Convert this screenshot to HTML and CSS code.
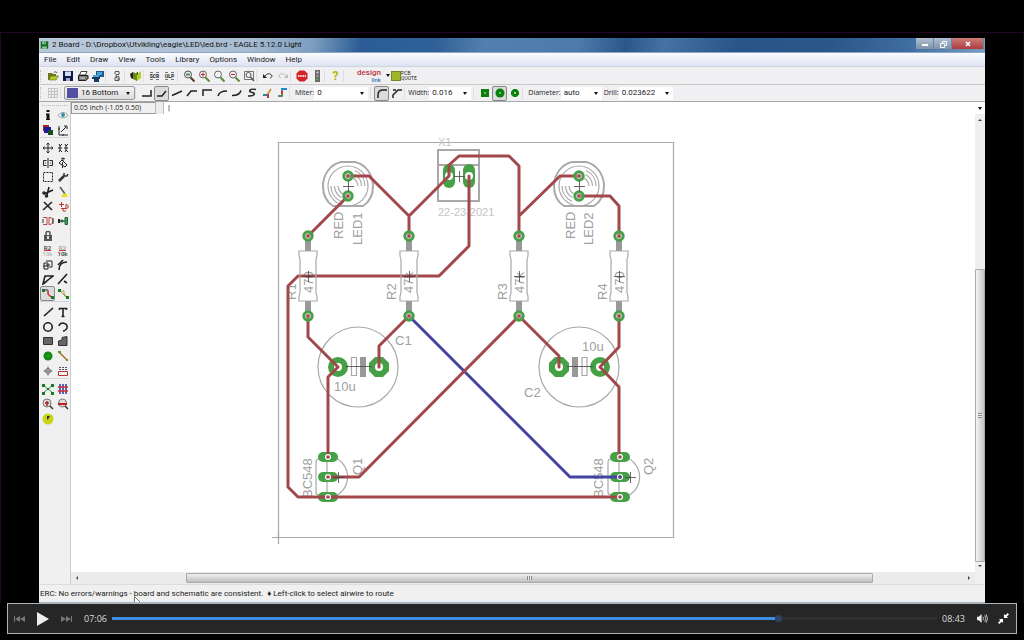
FILE: index.html
```html
<!DOCTYPE html>
<html lang="en">
<head>
<meta charset="utf-8">
<title>EAGLE board video</title>
<link rel="stylesheet" href="styles.css">
</head>
<body>
<main class="stage">
<section class="window">
  <header class="titlebar">
    <svg class="ico" viewBox="0 0 12 12"><path fill="#1d6b2a" d="M1 1h10v10H1z"/><path fill="#8fd08f" d="M3 1h5v4H3zM3 8h6v3H3z"/><path fill="#123" d="M6 2h1v2H6z"/></svg>
    <h1 class="title">2 Board - D:\Dropbox\Utvikling\eagle\LED\led.brd - EAGLE 5.12.0 Light</h1>
    <div class="wincontrols">
      <button class="wc" aria-label="Minimize"><svg viewBox="0 0 12 8"><path fill="#fff" d="M3 4h6v2H3z"/></svg></button>
      <button class="wc wc-max" aria-label="Restore"><svg viewBox="0 0 12 8"><path fill="none" stroke="#fff" d="M3.500 3.500h4v4h-4zM5.500 3v-1.500h4v4H8"/></svg></button>
      <button class="wc wc-close" aria-label="Close"><svg viewBox="0 0 12 8"><path stroke="#fff" stroke-width="1.500" d="M4 2l4 4M8 2l-4 4"/></svg></button>
    </div>
  </header>
  <nav class="menu">
    <button>File</button><button>Edit</button><button>Draw</button><button>View</button><button>Tools</button><button>Library</button><button>Options</button><button>Window</button><button>Help</button>
  </nav>
  <div class="toolbar">
    <span class="grip"></span>
    <button class="tool" aria-label="Open"><svg viewBox="0 0 12 12"><path fill="#6a7a18" d="M1 3h4l1 1h3v2H4L2 10H1z"/><path fill="#b9c83a" stroke="#5f6d10" stroke-width=".6" d="M4 6h7.500L9 10H2z"/><path fill="none" stroke="#333" stroke-width=".8" d="M7 2.500c1-1 2.500-1 3 .5"/></svg></button>
    <button class="tool" aria-label="Save"><svg viewBox="0 0 12 12"><path fill="#101a50" d="M1 1h10v10H1z"/><path fill="#cfe0f2" d="M3 1.500h6V6H3z"/><path fill="#aab" d="M4 8h4v3H4z"/></svg></button>
    <button class="tool" aria-label="Print"><svg viewBox="0 0 12 12"><path fill="#fff" stroke="#444" d="M4 1.500h6L8.500 5h-6z"/><path fill="#777" stroke="#222" d="M1.500 5.500h9.500v3l-2 2H1.500z"/><path stroke="#ddd" d="M3 8h5"/></svg></button>
    <button class="tool" aria-label="CAM processor"><svg viewBox="0 0 12 12"><path fill="#24588c" d="M4 1h8v6H4z"/><path fill="#45a5d8" d="M5 2h5v3H5zM1 5h6v2H1z"/><path fill="#163a60" d="M0 7h8v2H0zM2 9h5v3H2z"/></svg></button>
    <span class="sep"></span>
    <button class="tool" aria-label="Schematic"><svg viewBox="0 0 12 12"><path fill="none" stroke="#555" d="M4 1.500h4v3H5v2h3v4H4v-3h2M3 3h2M6 9h3"/></svg></button>
    <span class="sep"></span>
    <button class="tool" aria-label="Use library"><svg viewBox="0 0 12 12"><path fill="#222" d="M0 4l3-2v7l-2-1z"/><path fill="#6c8b12" d="M3 2l4 2v7L3 9z"/><path fill="#b5cc2a" d="M7 4l4-3v7l-4 3z"/><path fill="#26450c" d="M6 3l2-1v3z"/></svg></button>
    <span class="sep"></span>
    <button class="tool tiny" aria-label="Run script"><span>SCR</span></button>
    <button class="tool tiny" aria-label="Run ULP"><span>ULP</span></button>
    <span class="sep"></span>
    <button class="tool" aria-label="Zoom fit"><svg viewBox="0 0 12 12"><circle cx="5" cy="4.500" r="3.500" fill="#dfe8ee" stroke="#555"/><path stroke="#5a3a1a" stroke-width="2" d="M7.500 7.500l4 4"/><path fill="#58895a" d="M3 3.500h4v2H3z"/></svg></button>
    <button class="tool" aria-label="Zoom in"><svg viewBox="0 0 12 12"><circle cx="5" cy="4.500" r="3.500" fill="#f4eeee" stroke="#666"/><path stroke="#5c8a3a" stroke-width="2" d="M7.500 7.500l4 4"/><path stroke="#c22" d="M3 4.500h4M5 2.500v4"/></svg></button>
    <button class="tool" aria-label="Zoom out"><svg viewBox="0 0 12 12"><circle cx="5" cy="4.500" r="3.500" fill="#f4f4f4" stroke="#666"/><path stroke="#5c8a3a" stroke-width="2" d="M7.500 7.500l4 4"/></svg></button>
    <button class="tool" aria-label="Zoom redraw"><svg viewBox="0 0 12 12"><circle cx="5" cy="4.500" r="3.500" fill="#f4eeee" stroke="#666"/><path stroke="#5c8a3a" stroke-width="2" d="M7.500 7.500l4 4"/><path stroke="#c22" d="M3 4.500h4"/></svg></button>
    <button class="tool" aria-label="Zoom select"><svg viewBox="0 0 12 12"><path fill="none" stroke="#777" d="M1.500 1.500h9v8h-9z"/><circle cx="5.500" cy="5" r="2.500" fill="#eee" stroke="#555"/><path stroke="#555" stroke-width="1.500" d="M7.500 7l3.500 4"/></svg></button>
    <span class="sep"></span>
    <button class="tool" aria-label="Undo"><svg viewBox="0 0 12 12"><path fill="none" stroke="#333" d="M3 6c2-3 6-3 7 0 0 1-1 2-2 2"/><path fill="#222" d="M1 4v4h4z"/></svg></button>
    <button class="tool" aria-label="Redo"><svg viewBox="0 0 12 12"><path fill="none" stroke="#bbb" d="M9 6C7 3 3 3 2 6c0 1 1 2 2 2"/><path fill="#bbb" d="M11 4v4H7z"/></svg></button>
    <span class="sep"></span>
    <button class="tool" aria-label="Stop"><svg viewBox="0 0 12 12"><path fill="#d02428" d="M3.500.5h5l3 3v5l-3 3h-5l-3-3v-5z"/><path stroke="#fbd5d5" stroke-width="2" stroke-dasharray="1.500 .7" d="M2 6h8"/></svg></button>
    <button class="tool" aria-label="Go"><svg viewBox="0 0 12 12"><path fill="#666" d="M4 0h5v12H4z"/><circle cx="6.500" cy="2.500" r="1.300" fill="#bbb"/><circle cx="6.500" cy="6" r="1.300" fill="#999"/><circle cx="6.500" cy="9.500" r="1.300" fill="#5a5"/></svg></button>
    <span class="sep"></span>
    <button class="tool help" aria-label="Help">?</button>
    <span class="sep"></span>
    <button class="brand" aria-label="Design link"><span class="red">design</span><span class="blue">link</span></button>
    <span class="tri"></span>
    <button class="pcb" aria-label="PCB quote"><span class="chip"></span><span class="pcbtext">PCB<br>QUOTE</span></button>
  </div>
  <div class="toolbar second">
    <span class="grip"></span>
    <button class="tool" aria-label="Grid"><svg viewBox="0 0 12 12"><path fill="none" stroke="#c4c4c4" d="M1.500 1v10M4.500 1v10M7.500 1v10M10.500 1v10M1 1.500h10M1 4.500h10M1 7.500h10M1 10.500h10"/></svg></button>
    <span class="sep"></span>
    <label class="pick layer"><i class="swatch"></i><select aria-label="Layer"><option>16 Bottom</option></select></label>
    <span class="sep"></span>
    <button class="tool" aria-label="Bend 0"><svg class="w" viewBox="0 0 12 12"><path d="M1 9h9V3"/></svg></button>
    <button class="tool on" aria-label="Bend 1"><svg class="w" viewBox="0 0 12 12"><path d="M1 9h5l4-5"/></svg></button>
    <button class="tool" aria-label="Bend 2"><svg class="w" viewBox="0 0 12 12"><path d="M1 8.500L11 4"/></svg></button>
    <button class="tool" aria-label="Bend 3"><svg class="w" viewBox="0 0 12 12"><path d="M1 9l4-5h6"/></svg></button>
    <button class="tool" aria-label="Bend 4"><svg class="w" viewBox="0 0 12 12"><path d="M2 9V3h9"/></svg></button>
    <button class="tool" aria-label="Bend 5"><svg class="w" viewBox="0 0 12 12"><path d="M2 9c1-4 4-5 9-5"/></svg></button>
    <button class="tool" aria-label="Bend 6"><svg class="w" viewBox="0 0 12 12"><path d="M1 8.500c5 0 8-1 9-5"/></svg></button>
    <button class="tool" aria-label="Bend 7"><svg class="w" viewBox="0 0 12 12"><path d="M10 2.500C3 1 2 5 6 5.500s3 4-4 3.500"/></svg></button>
    <button class="tool" aria-label="Bend 8"><svg viewBox="0 0 12 12"><path stroke="#d08a20" stroke-width="1.500" d="M6 8l4-6"/><path stroke="#28a" stroke-width="2" d="M2 8h4"/><path stroke="#c33" stroke-width="2" d="M7 7v4"/></svg></button>
    <button class="tool" aria-label="Bend 9"><svg viewBox="0 0 12 12"><path stroke="#2a6a3a" stroke-width="1.500" fill="none" d="M2 9h4V2"/><path stroke="#28c" stroke-width="2" d="M5 2h6"/><path stroke="#c33" stroke-width="2" d="M6 4v3"/></svg></button>
    <span class="sep wide"></span>
    <label for="miter">Miter:</label>
    <span class="pick miter"><select id="miter"><option>0</option></select></span>
    <span class="sep"></span>
    <button class="tool on" aria-label="Round miter"><svg class="w" viewBox="0 0 12 12"><path d="M2 11V8c0-3 2-5 5-5h4"/></svg></button>
    <button class="tool" aria-label="Straight miter"><svg class="w" viewBox="0 0 12 12"><path d="M2 11V8l5-5h4M2 3h3"/></svg></button>
    <span class="sep"></span>
    <label for="width">Width:</label>
    <span class="pick width"><select id="width"><option>0.016</option></select></span>
    <span class="sep"></span>
    <button class="tool" aria-label="Square via"><svg viewBox="0 0 12 12"><path fill="#0c800c" d="M2 2h8v8H2z"/><circle cx="6" cy="6" r="1" fill="#8c8"/></svg></button>
    <button class="tool on" aria-label="Round via"><svg viewBox="0 0 12 12"><circle cx="6" cy="6" r="4.500" fill="#0c800c"/><circle cx="6" cy="6" r="1" fill="#8c8"/></svg></button>
    <button class="tool" aria-label="Octagon via"><svg viewBox="0 0 12 12"><path fill="#0c800c" d="M4.500 2h3L10 4.500v3L7.500 10h-3L2 7.500v-3z"/><circle cx="6" cy="6" r="1" fill="#cec"/></svg></button>
    <span class="sep wide"></span>
    <label for="diameter">Diameter:</label>
    <span class="pick diameter"><select id="diameter"><option>auto</option></select></span>
    <label for="drill">Drill:</label>
    <span class="pick drill"><select id="drill"><option>0.023622</option></select></span>
  </div>
  <div class="work">
    <aside class="side">
      <span class="hgrip"></span>
      <div class="group g2">
        <button aria-label="Info"><svg viewBox="0 0 12 12"><path fill="#111" d="M4.500 1h3v2h-3zM4 4.500h3.500V10H8v1H4v-1h.5V6H4z"/></svg></button>
        <button aria-label="Show"><svg viewBox="0 0 12 12"><path fill="#fff" stroke="#999" d="M1 6.500c3-4 7-4 10 0-3 3-7 3-10 0z"/><circle cx="6" cy="6" r="2" fill="#2a90b0"/></svg></button>
        <button aria-label="Display"><svg viewBox="0 0 12 12"><path fill="#a22" d="M1 1h6v6H1z"/><path fill="#1a1a9a" d="M2 3h7v6H2z"/><path fill="#174d20" d="M6 6h5v5H6z"/></svg></button>
        <button aria-label="Mark"><svg class="l" viewBox="0 0 12 12"><path d="M2 2v9h9M4 8l5-5M7 2h3v3M1 5h2M6 10v2"/></svg></button>
      </div>
      <div class="group g11">
        <button aria-label="Move"><svg class="l" viewBox="0 0 12 12"><path d="M6 1v10M1 6h10M4.500 2.500L6 1l1.500 1.500M4.500 9.500L6 11l1.500-1.500M2.500 4.500L1 6l1.500 1.500M9.500 4.500L11 6 9.500 7.500"/></svg></button>
        <button aria-label="Copy"><svg class="l" viewBox="0 0 12 12"><path d="M2 2l1 2v4l-1 2M5 2L3 4M5 10L3 8M8 2l1 2v4l-1 2M11 2L9 4M11 10L9 8M1 6h4M7 6h4"/></svg></button>
        <button aria-label="Mirror"><svg class="l" viewBox="0 0 12 12"><path d="M4.500 3.500h-3v5h3M7.500 3.500h3v5h-3M6 1v10M3 6h1M8 6h1"/></svg></button>
        <button aria-label="Rotate"><svg class="l" viewBox="0 0 12 12"><path d="M5.500 11V5M2 6l3-3 5 5-2 2zM6 1v3M4 2l2-1 2 1"/></svg></button>
        <button aria-label="Group"><svg class="l dash" viewBox="0 0 12 12"><path d="M1.500 1.500h9v9h-9z"/></svg></button>
        <button aria-label="Change"><svg viewBox="0 0 12 12"><path stroke="#333" stroke-width="2.500" d="M2 10l5-5"/><path fill="none" stroke="#333" stroke-width="1.500" d="M7 2v3h3l1-2"/></svg></button>
        <button aria-label="Cut"><svg class="l b" viewBox="0 0 12 12"><path d="M2 8l9-4M7 1L5 9"/><circle cx="2" cy="7" r="1"/><circle cx="4.500" cy="10" r="1"/></svg></button>
        <button aria-label="Paste"><svg viewBox="0 0 12 12"><path stroke="#555" stroke-width="1.500" d="M3 1l5 7"/><path fill="#e8e020" d="M6 8l3-1 2 4H4z"/></svg></button>
        <button aria-label="Delete"><svg class="l b" viewBox="0 0 12 12"><path d="M2 2l8 8M10 2l-9 8"/></svg></button>
        <button aria-label="Add"><svg viewBox="0 0 12 12"><path fill="none" stroke="#b33" d="M2 4.500h5M4.500 2v5M4 8.500h5v-4c3 0 3 4 0 4M6 8v3h3"/></svg></button>
        <button aria-label="Pinswap"><svg viewBox="0 0 12 12"><path fill="none" stroke="#b44" d="M1 2.500h4v7H1M7 2.500h1c4 1 4 6 0 7H7z"/><path stroke="#333" d="M1 4v4M11 3v6"/></svg></button>
        <button aria-label="Replace"><svg viewBox="0 0 12 12"><path fill="#222" d="M1 4h2v4H1z"/><path stroke="#222" d="M3 6h6"/><path fill="#496" stroke="#263" d="M8 2.500h2.500v7H8z"/><circle cx="5" cy="6" r="1.500" fill="#263"/></svg></button>
        <button aria-label="Lock"><svg viewBox="0 0 12 12"><path fill="none" stroke="#555" stroke-width="1.500" d="M4 5V3c0-2 4-2 4 0v2"/><path fill="#555" d="M2 5h8v6H2z"/><path fill="#ddd" d="M5 6h2v3H5z"/></svg></button>
        <span></span>
        <button class="names" aria-label="Name"><b>R2</b><i>10k</i></button>
        <button class="names alt" aria-label="Value"><b>R2</b><i>10k</i></button>
        <button aria-label="Smash"><svg class="l" viewBox="0 0 12 12"><path d="M2 4h4v6H2zM4 2h6v6H7M4 6h4M1 7h5"/></svg></button>
        <button aria-label="Miter"><svg class="l b" viewBox="0 0 12 12"><path d="M2 11c0-5 3-8 8-8M1 6l5-5"/></svg></button>
        <button aria-label="Split"><svg class="l b" viewBox="0 0 12 12"><path d="M1 11l2-8h8L6 7zM5 8l-4 3"/></svg></button>
        <button aria-label="Optimize"><svg class="l b" viewBox="0 0 12 12"><path d="M1 11L10 1M7 8l3 2"/></svg></button>
        <button class="on" aria-label="Route"><svg viewBox="0 0 12 12"><path fill="none" stroke="#226" d="M1 2h5"/><path fill="none" stroke="#c33" stroke-width="1.500" d="M6 2v4l3 3"/><path fill="#197a19" d="M0 1h3v3H0zM9 8h3v3H9z"/></svg></button>
        <button aria-label="Ripup"><svg viewBox="0 0 12 12"><path fill="none" stroke="#a95" d="M2 3h5v3l3 3M3 3l6 6"/><path fill="#197a19" d="M1 1h3v3H1zM9 8h3v3H9z"/></svg></button>
      </div>
      <div class="group g5">
        <button aria-label="Wire"><svg class="l b" viewBox="0 0 12 12"><path d="M2 10l9-8"/></svg></button>
        <button aria-label="Text"><svg class="l b" viewBox="0 0 12 12"><path d="M2.500 4V2.500h7V4M6 3v8M4.500 10.500h3"/></svg></button>
        <button aria-label="Circle"><svg class="l b" viewBox="0 0 12 12"><circle cx="6" cy="6" r="4.200"/></svg></button>
        <button aria-label="Arc"><svg class="l b" viewBox="0 0 12 12"><path d="M2 5c1-5 9-3 8 2-1 2-3 3-4 3"/></svg></button>
        <button aria-label="Rectangle"><svg viewBox="0 0 12 12"><path fill="#666" stroke="#333" d="M1.500 2.500h9v7h-9z"/></svg></button>
        <button aria-label="Polygon"><svg viewBox="0 0 12 12"><path fill="#666" stroke="#333" d="M1.500 10.500V6L5 5V2.500l5-1v9z"/></svg></button>
        <button aria-label="Via"><svg viewBox="0 0 12 12"><circle cx="6" cy="6" r="4.500" fill="#158a15"/><circle cx="6" cy="6" r="1" fill="#3a3"/></svg></button>
        <button aria-label="Signal"><svg viewBox="0 0 12 12"><path stroke="#a96a20" stroke-width="1.500" d="M2 2l8 8"/><path fill="#5a9a20" d="M1 1h3v2H1zM9 9h2v2H9z"/></svg></button>
        <button aria-label="Hole"><svg viewBox="0 0 12 12"><circle cx="6" cy="6" r="2.500" fill="none" stroke="#666"/><path stroke="#666" d="M6 1.500v9M1.500 6h9"/></svg></button>
        <button aria-label="Attribute"><svg viewBox="0 0 12 12"><path fill="none" stroke="#555" stroke-dasharray="2 1" d="M2 2.500h8M2 4.500h8"/><path fill="none" stroke="#b33" d="M1.500 6.500h9v4h-9z"/></svg></button>
      </div>
      <div class="group g3">
        <button aria-label="Ratsnest"><svg viewBox="0 0 12 12"><path stroke="#484" d="M1 2l10 8M1 10l10-8"/><path fill="#197a19" d="M0 1h3v3H0zM9 1h3v3H9zM0 9h3v3H0zM9 9h3v3H9zM5 5h2v2H5z"/></svg></button>
        <button aria-label="Autorouter"><svg viewBox="0 0 12 12"><path stroke="#2838a0" stroke-width="1.500" d="M3 1v10M6 1v10M9 1v10"/><path stroke="#c33" stroke-width="1.500" d="M1 4h10M1 8h10"/></svg></button>
        <button aria-label="ERC"><svg viewBox="0 0 12 12"><circle cx="5" cy="5" r="4" fill="#ddd" stroke="#777"/><path stroke="#a22" stroke-width="1.500" d="M5 3v5M3 5h4"/><path stroke="#333" stroke-width="1.500" d="M8 8l3 3"/></svg></button>
        <button aria-label="DRC"><svg viewBox="0 0 12 12"><circle cx="5.500" cy="5" r="4" fill="#ddd" stroke="#777"/><path stroke="#b22" stroke-width="2" d="M1 6h9"/><path stroke="#333" stroke-width="1.500" d="M8 8l3 3"/></svg></button>
        <button aria-label="Errors"><svg viewBox="0 0 12 12"><circle cx="6" cy="6" r="5.500" fill="#c8d418"/><path fill="#333" d="M5 3h3L6 6.500H5z"/></svg></button>
      </div>
    </aside>
    <div class="pane">
      <div class="command">
        <output class="coords">0.05 inch (-1.05 0.50)</output>
        <span class="cell"></span>
        <input class="cmd" aria-label="Command" value="|">
        <span class="tri"></span>
      </div>
      <div class="view">
        <svg class="board" viewBox="71 114 904 458" preserveAspectRatio="xMinYMin meet">
          <defs>
            <g id="res"><path class="lead" d="M0-35v10M0 25v10"/><path class="silk" d="M-9-25H9v5L8-17v34l1 3v5H-9v-5l1-3v-34l-1-3z"/></g>
            <g id="pad"><circle r="4.200" fill="none" stroke="#46a046" stroke-width="3"/><circle r="2.500" fill="#c09a9a"/><circle r="1.500" fill="#a2484c"/></g>
            <g id="led"><path class="silk thick" d="M-15 20C-23 15-25 6-25 0-25-12-17-22-7-24H7C17-22 25-12 25 0c0 6-2 15-10 20z"/><circle class="silk" r="20"/><path class="silk" d="M-17 0A17 17 0 0 0-7 15.500M-13.500 0a13.500 13.500 0 0 0 7 11.500M-10 0a10 10 0 0 0 5 8M17 0A17 17 0 0 0 7-15.500M13.500 0a13.500 13.500 0 0 0-7-11.500M10 0a10 10 0 0 0-5-8"/></g>
            <g id="tr"><path class="silk" d="M-1-20V20M-9-18q-3 0-3 3v30q0 3 3 3M5-20A21 21 0 0 1 5 20"/></g>
            <rect id="oval" x="-10" y="-5" width="20" height="10" rx="5" fill="#46a046"/>
            <path id="oct" fill="#46a046" d="M-4-10h8l6 6v8l-6 6h-8l-6-6v-8z"/>
            <path id="cross" class="mark" d="M-5 .5H6M.5-5V6"/>
            <g id="hole"><circle r="3" fill="#fff"/><circle r="1.800" fill="#a2484c"/></g>
          </defs>
          <path class="silk" d="M278.500 142.500h395v395h-395z"/>
          <path class="silk" d="M272 537.500h13M278.500 531v13"/>
          <g class="label">
            <text class="pale" x="438" y="146">X1</text><text class="pale" x="438" y="216">22-23-2021</text>
            <text transform="translate(343 239) rotate(-90)">RED</text><text transform="translate(362 245) rotate(-90)">LED1</text>
            <text transform="translate(575 239) rotate(-90)">RED</text><text transform="translate(593 245) rotate(-90)">LED2</text>
            <text transform="translate(296 300) rotate(-90)">R1</text><text transform="translate(396 300) rotate(-90)">R2</text>
            <text transform="translate(507 300) rotate(-90)">R3</text><text transform="translate(607 300) rotate(-90)">R4</text>
            <text transform="translate(313 293) rotate(-90)">470</text><text transform="translate(413 293) rotate(-90)">47k</text>
            <text transform="translate(524 293) rotate(-90)">47k</text><text transform="translate(624 293) rotate(-90)">470</text>
            <text x="395" y="345">C1</text><text x="334" y="391">10u</text><text x="524" y="397">C2</text><text x="582" y="351">10u</text>
            <text transform="translate(312 498) rotate(-90)">BC548</text><text transform="translate(603 498) rotate(-90)">BC548</text>
            <text transform="translate(362 475) rotate(-90)">Q1</text><text transform="translate(653 475) rotate(-90)">Q2</text>
          </g>
          <use href="#led" x="348" y="186"/><use href="#led" x="579" y="186"/>
          <path class="silk thick" d="M438 150h41v51h-41zM438 165h41"/>
          <circle class="silk" cx="358" cy="367" r="40"/><circle class="silk" cx="579" cy="367" r="40"/>
          <path class="silk" d="M351.500 357.500h5v18h-5zM582 357.500h5v18h-5z"/>
          <path class="plate" d="M360 357h6v20h-6zM572 357h6v20h-6z"/>
          <use href="#tr" x="328" y="477"/><use href="#tr" x="620" y="477"/>
          <g fill="#46a046">
            <rect x="443" y="164" width="12" height="24" rx="6"/><rect x="463" y="164" width="12" height="24" rx="6"/>
            <circle cx="338" cy="367" r="10"/><circle cx="600" cy="367" r="10"/>
          </g>
          <use href="#oct" x="379" y="367"/><use href="#oct" x="559" y="367"/>
          <use href="#oval" x="328" y="457"/><use href="#oval" x="328" y="477"/><use href="#oval" x="328" y="497"/>
          <use href="#oval" x="620" y="457"/><use href="#oval" x="620" y="477"/><use href="#oval" x="620" y="497"/>
          <g fill="#fff">
            <circle cx="449" cy="176" r="4"/><circle cx="469" cy="176" r="4"/><circle cx="338" cy="367" r="4"/><circle cx="379" cy="367" r="4"/><circle cx="559" cy="367" r="4"/><circle cx="600" cy="367" r="4"/>
          </g>
          <path class="trace blue" d="M409 316l161 161h50"/>
          <g class="trace">
            <path d="M348 196l-40 40M348 176h21l40 40v20M409 216l40-40v-11l10-9h50l10 10v70M519 216l41-40h19M579 196h31l9 10v30"/>
            <path d="M469 176v70l-30 30H298l-10 10v201l10 10h322"/>
            <path d="M308 316v21l30 30-10 10v80M409 316l-30 30v21M328 477h31l160-161 40 40v11M619 316v31l-19 20 19 20v70"/>
          </g>
          <use href="#res" x="308" y="276"/><use href="#res" x="409" y="276"/><use href="#res" x="519" y="276"/><use href="#res" x="619" y="276"/>
          <use href="#pad" x="308" y="236"/><use href="#pad" x="409" y="236"/><use href="#pad" x="519" y="236"/><use href="#pad" x="619" y="236"/>
          <use href="#pad" x="308" y="316"/><use href="#pad" x="409" y="316"/><use href="#pad" x="519" y="316"/><use href="#pad" x="619" y="316"/>
          <use href="#pad" x="348" y="176"/><use href="#pad" x="348" y="196"/><use href="#pad" x="579" y="176"/><use href="#pad" x="579" y="196"/>
          <use href="#hole" x="328" y="457"/><use href="#hole" x="328" y="477"/><use href="#hole" x="328" y="497"/>
          <use href="#hole" x="620" y="457"/><use href="#hole" x="620" y="477"/><use href="#hole" x="620" y="497"/>
          <circle cx="620" cy="477" r="1.800" fill="#4444a0"/>
          <use href="#cross" x="308" y="276"/><use href="#cross" x="409" y="276"/><use href="#cross" x="519" y="276"/><use href="#cross" x="619" y="276"/>
          <use href="#cross" x="348" y="186"/><use href="#cross" x="579" y="186"/><use href="#cross" x="459" y="176"/><use href="#cross" x="338" y="477"/><use href="#cross" x="630" y="477"/>
          <path class="mark" d="M346 366.500h26M567 366.500h26"/>
        </svg>
        <div class="vbar"><i class="arrow up"></i><i></i><i class="thumb"></i><i class="arrow down"></i></div>
        <div class="hbar"><i class="arrow left"></i><i></i><i class="thumb"></i><i></i><i class="arrow right"></i></div>
        <span class="corner"></span>
      </div>
    </div>
  </div>
  <footer class="status">ERC: No errors/warnings - board and schematic are consistent. &nbsp;♦ Left-click to select airwire to route
    <svg class="pointer" viewBox="0 0 8 8"><path fill="#fff" stroke="#777" d="M.5.5v10L3 8h5z"/></svg>
  </footer>
</section>
</main>
<section class="player">
  <button aria-label="Previous"><svg class="dim" viewBox="0 0 12 8"><path d="M0 1h1v6H0zM6 1v6L1 4zM11 1v6L6 4z"/></svg></button>
  <button class="play" aria-label="Play"><svg viewBox="0 0 12 14"><path fill="#eee" d="M0 0l12 7-12 7z"/></svg></button>
  <button aria-label="Next"><svg class="dim" viewBox="0 0 12 8"><path d="M11 1h1v6h-1zM6 1v6l5-3zM1 1v6l5-3z"/></svg></button>
  <time>07:06</time>
  <input class="seek" type="range" aria-label="Seek" min="0" max="100" value="81" style="--played:81%">
  <time>08:43</time>
  <button aria-label="Volume"><svg class="p12" viewBox="0 0 12 12"><path fill="#eee" d="M0 4h2l3-3v10L2 8H0z"/><path fill="none" stroke="#ccc" d="M6.500 4q1 2 0 4M8.500 2.500q2 3.500 0 7M10 1.500q3 4.500 0 9"/></svg></button>
  <button class="shrink" aria-label="Exit full screen"><svg class="p12" viewBox="0 0 12 12"><path fill="#fff" d="M6.500 1l1.500 1.500L10.500 0 12 1.500 9.500 4 11 5.500H6.500zM1 6.500h4.500V11L4 9.500 1.500 12 0 10.500 2.500 8z"/></svg></button>
</section>
</body>
</html>
```
FILE: styles.css
```css
* { box-sizing: border-box; }
body {
  margin: 0;
  min-height: 100vh;
  padding: 32px 0 6px;
  display: flex;
  flex-direction: column;
  background: #000;
  font: 8px/10px Roboto, "Noto Sans", sans-serif;
  color: #222;
}
button, select, input {
  font: inherit;
  color: inherit;
  border: 0;
  padding: 0;
  margin: 0;
  background: none;
}
button { display: flex; align-items: center; justify-content: center; }
svg { display: block; }
.stage {
  flex: 1;
  display: flex;
  padding: 5px 38px 0;
  border: 1px solid #240428;
  border-right-color: #021402;
  border-bottom: 0;
}
.window { flex: 1; min-width: 0; display: flex; flex-direction: column; background: #f0f0f0; }
.titlebar {
  display: flex;
  height: 15px;
  padding: 0 1px;
  gap: 3px;
  background: linear-gradient(100deg, #b9c9da 0, #a9bdd2 22%, #7d9dbf 29%, #2c5c95 34%, #2f6097 42%, #527fae 47%, #4d7aaa 57%, #2b578c 62%, #4572a4 66%, #28548a 74%, #2c578b 84%, #3f6ea3 92%, #7c9cc0 100%);
  border-bottom: 1px solid #8da6c2;
}
.ico { width: 9px; height: 10px; margin-top: 2px; }
.title { margin: 0; padding-top: 2px; font-size: 8px; font-weight: 400; line-height: 10px; flex: 1; white-space: nowrap; color: #111; }
.wincontrols { display: flex; height: 11px; }
.wc { width: 18px; background: linear-gradient(#b3c0d0, #7d93ae); border-right: 1px solid #6d83a0; }
.wc-close { width: 32px; background: linear-gradient(#cc7d7a, #ac3c3e); }
.wc svg { width: 12px; height: 8px; }
.menu {
  display: flex;
  height: 14px;
  padding: 0 5px;
  gap: 10px;
  background: linear-gradient(#fafbfe, #dde3f2);
  border-bottom: 1px solid #cfd3dd;
}
.toolbar {
  display: flex;
  align-items: center;
  height: 18px;
  padding-left: 1px;
  background: #f0eff1;
  border-bottom: 1px solid #c9c9c9;
}
.second { height: 17px; border-bottom-color: #a8a8a8; }
.grip { width: 5px; height: 12px; border-left: 1px dotted #bbb; }
.sep { width: 4px; height: 12px; border-left: 1px solid #dedede; flex: none; }
.wide { width: 6px; }
.tool { width: 15px; height: 15px; flex: none; }
.tool svg { width: 12px; height: 12px; }
.on { background: #dcdcdc; border: 1px solid #888; border-radius: 2px; }
.w, .l { fill: none; stroke: #222; stroke-width: 1.5; }
.l { stroke-width: 1; }
.b { stroke-width: 1.6; }
.dash { stroke-dasharray: 2 1; }
.tiny { font-size: 5px; line-height: 6px; font-weight: 700; }
.tiny span { border-bottom: 1px dashed #777; border-top: 1px dashed #777; }
.help { font-size: 12px; font-weight: 700; color: #b5b800; }
.brand { width: 30px; height: 14px; display: grid; align-content: center; font-size: 8px; line-height: 8px; font-weight: 500; margin: 0 2px 0 7px; text-align: left; }
.red { color: #b8363c; }
.blue { color: #3a78b4; font-size: 6px; line-height: 6px; text-align: right; }
.tri { width: 0; height: 0; border: 2px solid transparent; border-top: 3px solid #111; border-bottom: 0; }
.pcb { margin-left: 1px; font-size: 5px; line-height: 5px; text-align: left; }
.chip { width: 10px; height: 10px; background: #9fb52a; border: 1px solid #6e8a20; }
.pick { position: relative; display: flex; align-items: center; background: #fff; height: 13px; flex: none; }
.pick select { appearance: none; width: 100%; height: 13px; padding: 0 3px; border-radius: 0; }
.pick::after { content: ""; position: absolute; right: 4px; top: 5px; border: 2px solid transparent; border-top: 3px solid #111; border-bottom: 0; pointer-events: none; }
.layer { width: 71px; height: 14px; background: linear-gradient(#f4f4f4, #dcdcdc); border: 1px solid #999; border-radius: 2px; padding-left: 2px; }
.swatch { width: 11px; height: 10px; background: #5250a0; flex: none; }
.miter { width: 54px; }
.miter + .sep { margin-left: 2px; }
.layer + .sep { width: 4px; }
.width { width: 42px; margin-right: 2px; }
.diameter { width: 41px; margin-right: 2px; }
.drill { width: 54px; }
.second > label:not(.pick) { flex: none; font: 7px/10px "Open Sans", "Noto Sans", sans-serif; }
.work { flex: 1; display: flex; min-height: 0; }
.side { width: 32px; flex: none; padding: 3px 1px 0; border-right: 1px solid #ccc; }
.hgrip { display: block; height: 2px; margin: 0 2px; border-top: 1px dotted #bbb; }
.group { display: grid; grid-template-columns: 15px 15px; grid-auto-rows: 1fr; border-bottom: 1px solid #d4d4d4; margin-bottom: 3px; }
.group svg { width: 12px; height: 12px; }
.g2 { height: 31px; }
.g11 { height: 161px; }
.g5 { height: 74px; }
.g3 { height: 44px; border: 0; margin: 0; }
.names { flex-direction: column; font-size: 6px; line-height: 5px; color: #555; }
.names b { border-bottom: 1px solid #c33; }
.names i { font-style: normal; color: #aaa; }
.alt b { color: #aaa; }
.alt i { color: #555; font-weight: 700; }
.pane { flex: 1; min-width: 0; display: flex; flex-direction: column; }
.command { display: flex; height: 12px; background: #fff; align-items: center; padding-right: 3px; }
.coords { width: 85px; height: 12px; padding-left: 2px; background: #f0f0f0; border: 1px solid #999; border-right-color: #bbb; white-space: nowrap; font-family: "Open Sans", "Noto Sans", sans-serif; font-size: 7px; }
.cell { width: 8px; height: 12px; background: #ececec; border-right: 1px solid #bbb; }
.cmd { flex: 1; padding-left: 4px; outline: 0; }
.view { flex: 1; min-height: 0; display: grid; grid-template: 1fr 12px / 1fr 10px; background: #fff; }
.board { width: 100%; height: 100%; min-height: 0; }
.vbar { display: grid; grid-template-rows: 10px 145fr 293fr 10px; background: #efefef; justify-items: center; }
.hbar { display: grid; grid-template-columns: 10px 105fr 687fr 92fr 10px; background: #ececec; align-items: center; }
.corner { background: #f0f0f0; }
.thumb { width: 10px; height: 100%; border: 1px solid #aaa; border-radius: 1px; background: linear-gradient(90deg, #f4f4f4, #c4c4c4); display: grid; place-items: center; }
.thumb::after { content: ""; width: 4px; height: 5px; background: repeating-linear-gradient(#888 0 1px, #eee 1px 2px); }
.hbar .thumb { width: 100%; height: 10px; background: linear-gradient(#f0f0f0, #bebebe); }
.hbar .thumb::after { width: 5px; height: 4px; background: repeating-linear-gradient(90deg, #888 0 1px, #eee 1px 2px); }
.arrow { width: 0; height: 0; border: 2px solid transparent; place-self: center; }
.up { border-bottom-color: #444; }
.down { border-top-color: #444; }
.left { border-right-color: #444; }
.right { border-left-color: #444; }
.silk { fill: none; stroke: #a9a9a9; stroke-width: 1.2; }
.thick { stroke-width: 2; }
.lead { stroke: #999; stroke-width: 6; }
.plate { fill: #999; }
.mark { fill: none; stroke: #444; stroke-width: 1; opacity: .8; }
.trace { fill: none; stroke: #a2484c; stroke-width: 3; stroke-linejoin: round; stroke-linecap: round; }
.trace.blue { stroke: #4444a0; }
.label { font: 13px "Liberation Sans", Arial, sans-serif; fill: #a0a0a0; }
.pale { font-size: 11px; fill: #c4c4c4; }
.status { position: relative; height: 19px; padding: 4px 1px 0; border-bottom: 1px solid #9db4c8; border-top: 1px solid #ddd; white-space: nowrap; overflow: hidden; }
.pointer { position: absolute; left: 95px; top: 11px; width: 8px; height: 8px; overflow: visible; }
.player {
  display: flex;
  align-items: center;
  height: 31px;
  margin: 0 7px;
  padding: 0 7px 0 6px;
  background: #262626;
  border: 1px solid #b4b4b4;
  color: #ddd;
  font: 9px/12px "Open Sans", "Noto Sans", sans-serif;
}
.player button svg { width: 12px; height: 8px; }
.player .play { margin: 0 11px; }
.player .play svg { width: 12px; height: 14px; }
.player button .p12 { width: 11px; height: 11px; }
.dim { fill: #777; }
.player time { margin-left: 12px; }
.player .seek + time { margin: 0 12px 0 5px; }
.shrink { margin-left: 10px; }
.seek { appearance: none; flex: 1; min-width: 0; height: 12px; margin-left: 5px; }
.seek::-webkit-slider-runnable-track { height: 3px; background: linear-gradient(90deg, #3c8ee2 var(--played), #303030 var(--played)); }
.seek::-webkit-slider-thumb { appearance: none; width: 7px; height: 7px; margin-top: -2px; border-radius: 50%; background: #2c4468; }
```
